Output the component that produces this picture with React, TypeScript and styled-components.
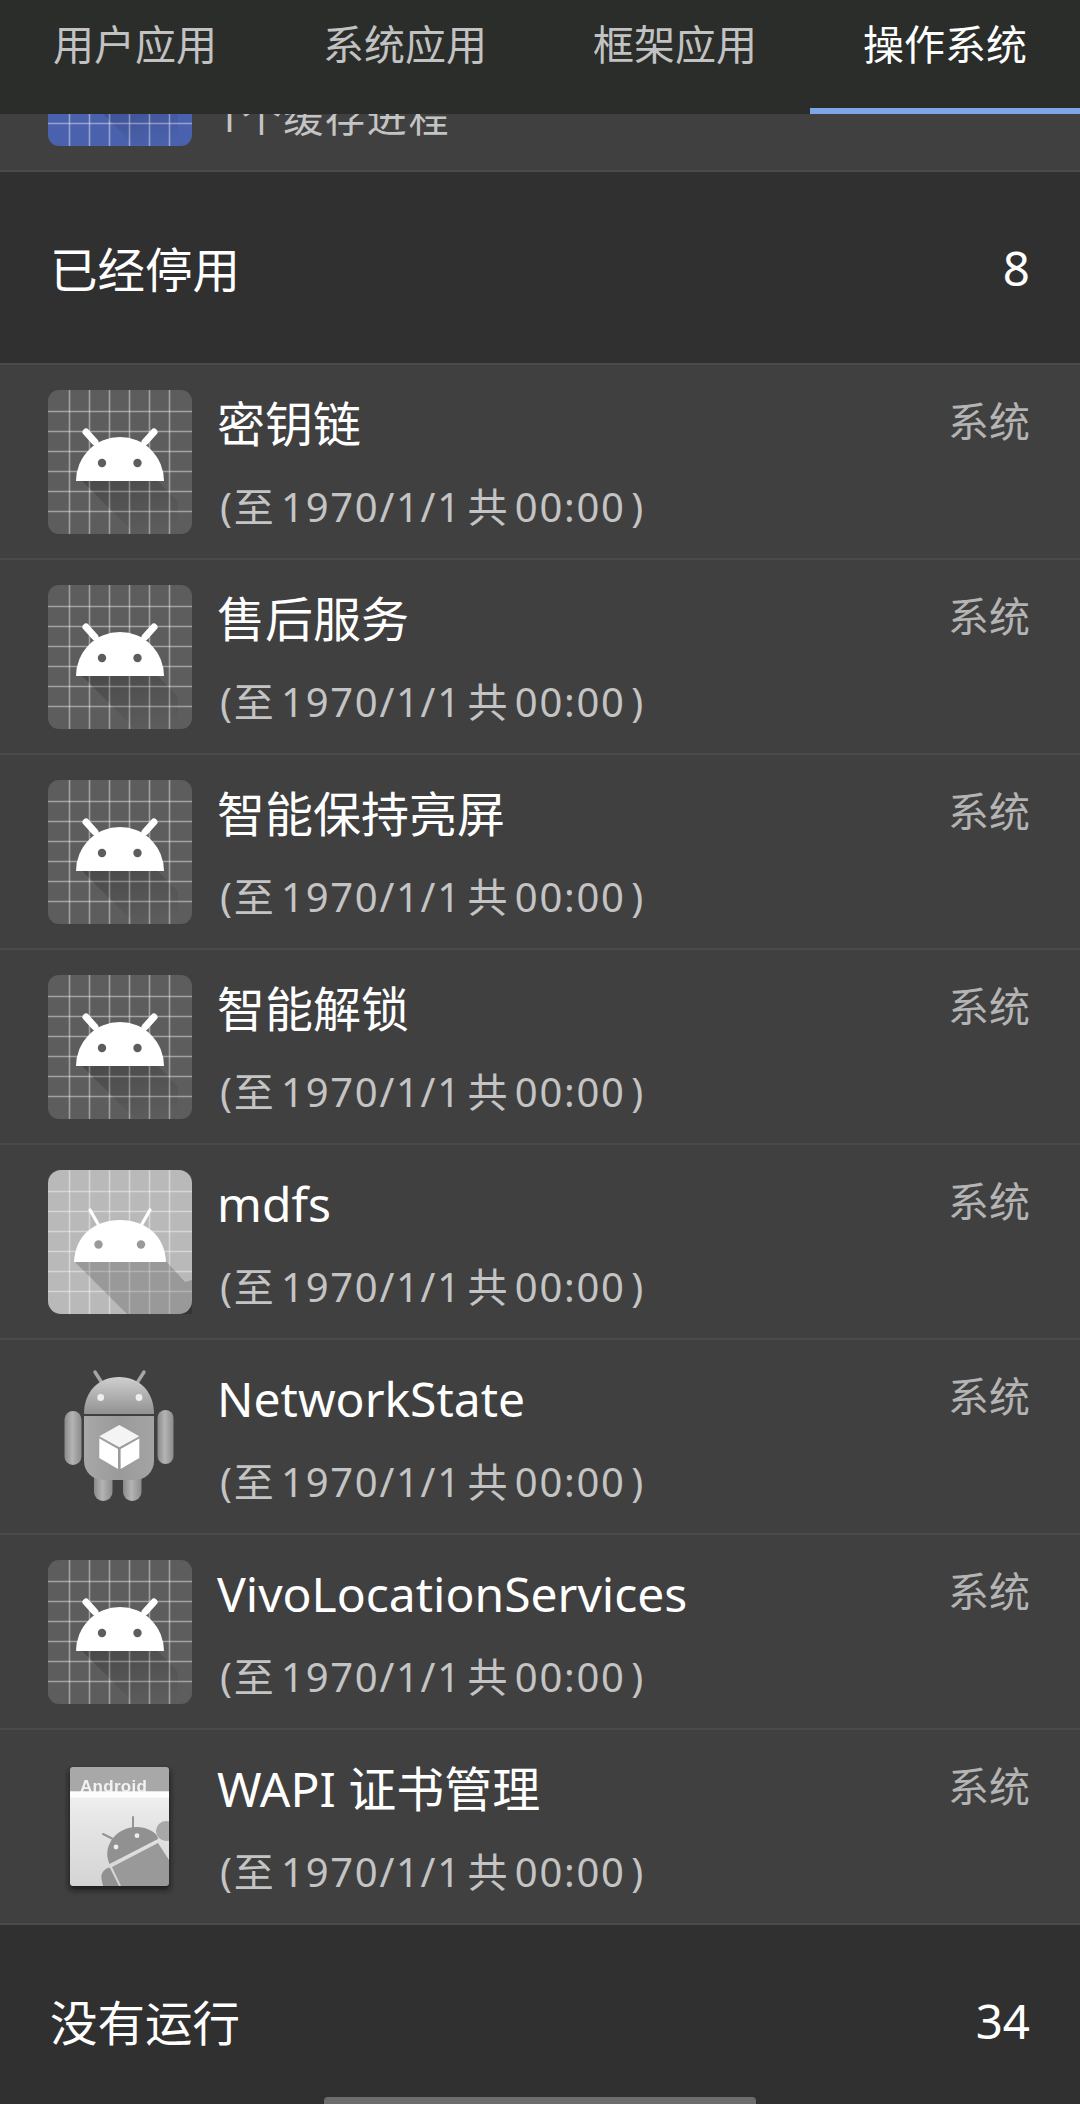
import { useId } from 'react';
import styled, { createGlobalStyle } from 'styled-components';

const FONT = `"Noto Sans", "Noto Sans CJK SC", sans-serif`;

type IconKind = 'grid' | 'blue' | 'mdfs' | 'robot' | 'cert';

interface IApp {
  title: string;
  icon: IconKind;
}

const TABS = ['用户应用', '系统应用', '框架应用', '操作系统'];

const DISABLED: IApp[] = [
  { title: '密钥链', icon: 'grid' },
  { title: '售后服务', icon: 'grid' },
  { title: '智能保持亮屏', icon: 'grid' },
  { title: '智能解锁', icon: 'grid' },
  { title: 'mdfs', icon: 'mdfs' },
  { title: 'NetworkState', icon: 'robot' },
  { title: 'VivoLocationServices', icon: 'grid' },
  { title: 'WAPI 证书管理', icon: 'cert' },
];

const GRID_LINES = [21.5, 41.5, 61.5, 81.5, 101.5, 121.5];

// hair spaces: the original font leaves a little air round the CJK glyphs
const USAGE = '(至\u200a1970/1/1\u200a共\u200a00:00\u200a)';

function GridLines() {
  return (
    <g stroke="#fff" strokeOpacity="0.42" strokeWidth="1.6">
      {GRID_LINES.map((p) => (
        <g key={p}>
          <line x1={p} y1="0" x2={p} y2="144" />
          <line x1="0" y1={p} x2="144" y2={p} />
        </g>
      ))}
    </g>
  );
}

function GridIcon({ bg }: { bg: string }) {
  const id = useId();
  return (
    <svg width="144" height="144" viewBox="0 0 144 144">
      <defs>
        <linearGradient id={id} x1="0.2" y1="0" x2="0.8" y2="1">
          <stop offset="0" stopColor="#000" stopOpacity="0.2" />
          <stop offset="1" stopColor="#000" stopOpacity="0" />
        </linearGradient>
      </defs>
      <rect width="144" height="144" rx="11" fill={bg} />
      <GridLines />
      <path d="M34 91 L86 143 L130 143 L130 112 L110 91 Z" fill={`url(#${id})`} />
      <path
        d="M38 42 L47 52 M106 42 L97 52"
        stroke="#fff"
        strokeWidth="7"
        strokeLinecap="round"
      />
      <path d="M28 91 A44 44 0 0 1 116 91 Z" fill="#fff" />
      <circle cx="54" cy="73" r="4.2" fill={bg} />
      <circle cx="89.5" cy="73" r="4.2" fill={bg} />
    </svg>
  );
}

function MdfsIcon() {
  return (
    <svg width="144" height="144" viewBox="0 0 144 144">
      <rect width="144" height="144" rx="13" fill="#b9b9b9" />
      <GridLines />
      <path d="M26 91 L79 144 L144 144 L144 110 L137 112 L118 91 Z" fill="#000" fillOpacity="0.17" />
      <path
        d="M42 40 L50 54 M102 40 L94 54"
        stroke="#fff"
        strokeWidth="3.2"
        strokeLinecap="round"
      />
      <path d="M26 92 C27 66 46 50 72 50 C98 50 117 66 118 92 Z" fill="#fff" />
      <circle cx="50.5" cy="74.5" r="4.2" fill="#9a9a9a" />
      <circle cx="93" cy="74.5" r="4.2" fill="#9a9a9a" />
    </svg>
  );
}

function RobotIcon() {
  const id = useId();
  return (
    <svg width="144" height="144" viewBox="0 0 144 144">
      <defs>
        <linearGradient id={`${id}h`} x1="0" y1="0" x2="0" y2="1">
          <stop offset="0" stopColor="#cfcfcf" />
          <stop offset="1" stopColor="#929292" />
        </linearGradient>
        <linearGradient id={`${id}b`} x1="0" y1="0" x2="1" y2="0">
          <stop offset="0" stopColor="#a8a8a8" />
          <stop offset="0.5" stopColor="#9a9a9a" />
          <stop offset="1" stopColor="#a4a4a4" />
        </linearGradient>
        <linearGradient id={`${id}a`} x1="0" y1="0" x2="1" y2="0">
          <stop offset="0" stopColor="#8a8a8a" />
          <stop offset="0.45" stopColor="#b4b4b4" />
          <stop offset="1" stopColor="#8c8c8c" />
        </linearGradient>
        <filter id={`${id}s`} x="-5%" y="-5%" width="110%" height="110%">
          <feGaussianBlur stdDeviation="0.7" />
        </filter>
      </defs>
      <g filter={`url(#${id}s)`}>
        <path d="M47 7 L54 18 M96 7 L89 18" stroke="#a6a6a6" strokeWidth="3.4" strokeLinecap="round" />
        <path d="M36 49 C36 27 50 12 71 12 C92 12 106 27 106 49 Z" fill={`url(#${id}h)`} />
        <circle cx="52.7" cy="32.5" r="3.4" fill="#eee" />
        <circle cx="91" cy="32.5" r="3.4" fill="#eee" />
        <rect x="16.5" y="46" width="17" height="54" rx="8.5" fill={`url(#${id}a)`} />
        <rect x="109.5" y="45" width="16" height="54" rx="8" fill={`url(#${id}a)`} />
        <rect x="46" y="100" width="18.5" height="36" rx="9" fill={`url(#${id}a)`} />
        <rect x="75" y="100" width="18.5" height="36" rx="9" fill={`url(#${id}a)`} />
        <path
          d="M36 51 H106 V96 A19 19 0 0 1 87 115 H55 A19 19 0 0 1 36 96 Z"
          fill={`url(#${id}b)`}
        />
      </g>
      <path d="M71.3 60 L91.3 71.3 L71.3 82.3 L51.3 71.3 Z" fill="#f4f4f4" />
      <path d="M51.3 73.5 L70 84 V104 L51.3 93 Z" fill="#fff" />
      <path d="M72.6 84 L91.3 73.5 V93 L72.6 104 Z" fill="#fff" />
    </svg>
  );
}

function CertIcon() {
  const id = useId();
  return (
    <svg width="144" height="144" viewBox="0 0 144 144">
      <defs>
        <linearGradient id={`${id}p`} x1="0" y1="0" x2="0" y2="1">
          <stop offset="0" stopColor="#fafafa" />
          <stop offset="0.45" stopColor="#e6e6e6" />
          <stop offset="1" stopColor="#d4d4d4" />
        </linearGradient>
        <filter id={`${id}s`} x="-20%" y="-20%" width="140%" height="140%">
          <feGaussianBlur stdDeviation="2.5" />
        </filter>
        <filter id={`${id}b`} x="-5%" y="-5%" width="110%" height="110%">
          <feGaussianBlur stdDeviation="0.5" />
        </filter>
        <clipPath id={`${id}c`}>
          <rect x="22" y="12" width="99" height="119" rx="3" />
        </clipPath>
      </defs>
      <rect x="21" y="15" width="101" height="120" rx="3" fill="#1c1c1c" filter={`url(#${id}s)`} />
      <g clipPath={`url(#${id}c)`} filter={`url(#${id}b)`}>
        <rect x="22" y="12" width="99" height="119" fill={`url(#${id}p)`} />
        <rect x="22" y="12" width="99" height="24.5" fill="#a8a8a8" />
        <text
          x="32"
          y="37"
          fill="#f2f2f2"
          fontFamily="'Liberation Sans', sans-serif"
          fontSize="17"
          fontWeight="700"
          letterSpacing="0.3"
        >
          Android
        </text>
        <rect x="22" y="36.5" width="99" height="6" fill="#fdfdfd" />
        <path d="M85 62 V73 M55 79 L64 83.5" stroke="#959595" strokeWidth="2" strokeLinecap="round" />
        <path d="M61.5 109 C53 90 70 71 90 72 C102 73 110 79 110 84 Z" fill="#919191" />
        <path d="M64 112 L110 88 L121 105 V131 H73 Z" fill="#999" />
        <path d="M53.5 124 C52 116 60 112 62 113 L71 131 H55 Z" fill="#919191" />
        <circle cx="118" cy="76" r="10" fill="#a8a8a8" />
        <circle cx="68" cy="92" r="2.4" fill="#eee" />
        <circle cx="89" cy="80.7" r="2.4" fill="#eee" />
      </g>
    </svg>
  );
}

function AppIcon({ kind }: { kind: IconKind }) {
  if (kind === 'grid') return <GridIcon bg="#5d5d5d" />;
  if (kind === 'blue') return <GridIcon bg="#4a61ad" />;
  if (kind === 'mdfs') return <MdfsIcon />;
  if (kind === 'robot') return <RobotIcon />;
  return <CertIcon />;
}

function App() {
  return (
    <Page>
      <GlobalStyle />
      <Tabs>
        {TABS.map((tab, i) => (
          <Tab key={tab} $active={i === 3}>
            {tab}
          </Tab>
        ))}
      </Tabs>
      <List>
        <Row>
          <IconBox>
            <AppIcon kind="blue" />
          </IconBox>
          <Body>
            <Title>&nbsp;</Title>
            <CacheNote>1个缓存进程</CacheNote>
          </Body>
        </Row>
        <SectionHeader>
          <span>已经停用</span>
          <span>8</span>
        </SectionHeader>
        {DISABLED.map((app) => (
          <Row key={app.title}>
            <IconBox>
              <AppIcon kind={app.icon} />
            </IconBox>
            <Body>
              <Title>{app.title}</Title>
              <Sub>{USAGE}</Sub>
            </Body>
            <Tag>系统</Tag>
          </Row>
        ))}
        <SectionHeader>
          <span>没有运行</span>
          <span>34</span>
        </SectionHeader>
      </List>
      <HomeBar />
    </Page>
  );
}

export default App;

const GlobalStyle = createGlobalStyle`
  html, body {
    margin: 0;
    padding: 0;
    background: #303030;
  }
`;

const Page = styled.div`
  position: relative;
  width: 1080px;
  height: 2104px;
  overflow: hidden;
  background: #303030;
  font-family: ${FONT};
`;

const Tabs = styled.div`
  position: absolute;
  top: 0;
  left: 0;
  right: 0;
  z-index: 2;
  display: flex;
  height: 114px;
  background: #2a2d2a;
`;

const Tab = styled.div<{ $active: boolean }>`
  flex: 1;
  display: flex;
  justify-content: center;
  align-items: center;
  box-sizing: border-box;
  padding-bottom: 24px;
  font-size: 41px;
  color: ${(props) => (props.$active ? '#ffffff' : '#c2c2c2')};
  border-bottom: 6px solid ${(props) => (props.$active ? '#7ea5e4' : 'transparent')};
`;

const List = styled.div`
  margin-top: -25px;
`;

const Row = styled.div`
  display: flex;
  align-items: flex-start;
  box-sizing: border-box;
  height: 195px;
  padding: 25px 50px 0 48px;
  background: #404040;
  border-top: 2px solid #4a4a4a;
`;

const IconBox = styled.div`
  flex: none;
  width: 144px;
  height: 144px;
  margin-right: 25px;
`;

const Body = styled.div`
  flex: 1;
  display: flex;
  flex-direction: column;
  gap: 25px;
  margin-top: 4px;
`;

const Title = styled.div`
  font-size: 48px;
  line-height: 60px;
  color: #ffffff;
`;

const Sub = styled.div`
  padding-left: 3px;
  font-size: 40px;
  line-height: 56px;
  letter-spacing: 1.7px;
  color: #c4c4c4;
`;

const CacheNote = styled(Sub)`
  padding-left: 0;
  transform: translateY(-2px);
`;

const Tag = styled.div`
  margin-top: 3px;
  font-size: 41px;
  line-height: 56px;
  color: #b4b4b4;
`;

const SectionHeader = styled.div`
  display: flex;
  justify-content: space-between;
  align-items: center;
  box-sizing: border-box;
  height: 193px;
  padding: 0 50px 1px;
  background: #303030;
  border-top: 2px solid #4a4a4a;
  font-size: 47.5px;
  color: #ffffff;
`;

const HomeBar = styled.div`
  position: absolute;
  left: 324px;
  bottom: 0;
  width: 432px;
  height: 7px;
  border-radius: 4px 4px 0 0;
  background: #6c6c6c;
`;
